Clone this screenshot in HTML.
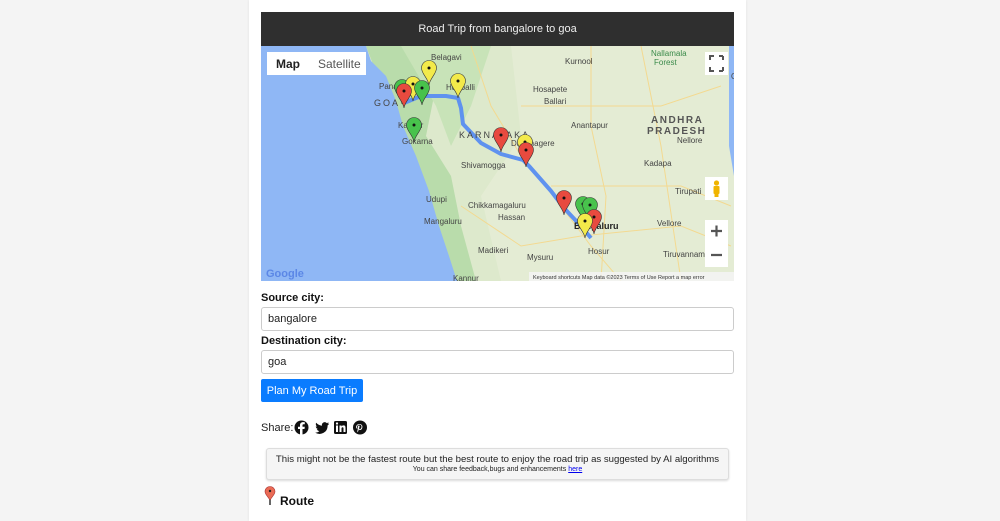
<!DOCTYPE html>
<html><head><meta charset="utf-8"><style>
*{box-sizing:border-box}
body{margin:0;background:#f4f4f4;font-family:"Liberation Sans",Arial,sans-serif;}
.card{position:absolute;left:249px;top:0;width:497px;height:521px;background:#fff;box-shadow:0 0 3px rgba(0,0,0,.08);}
.hdr{position:absolute;left:261px;top:12px;width:473px;height:34px;background:#2f2f2f;color:#eee;font-size:11px;text-align:center;line-height:34px;}
.map{position:absolute;left:261px;top:46px;width:473px;height:235px;overflow:hidden;background:#d8e8c8;}
.lbl{position:absolute;left:261px;font-size:11px;font-weight:bold;color:#111;}
.inp{position:absolute;left:261px;width:473px;height:24px;border:1px solid #ccc;border-radius:3px;padding-left:6px;font-size:11px;line-height:22px;color:#222;}
.btn{position:absolute;left:261px;top:379px;width:102px;height:23px;background:#0a7cff;color:#fff;font-size:11px;text-align:center;line-height:24px;border-radius:2px;}
.note{position:absolute;left:266px;top:448px;width:463px;height:32px;background:#f5f5f5;border:1px solid #ddd;border-radius:3px;box-shadow:0 1px 2px rgba(0,0,0,.15);text-align:center;}
</style></head><body>
<div class="card"></div>
<div class="hdr">Road Trip from bangalore to goa</div>
<div class="map">
<svg width="473" height="235" viewBox="0 0 473 235" font-family="Liberation Sans">
<defs>
<symbol id="pin" viewBox="0 0 16 26" overflow="visible"><path d="M8 25 C7 18 0.5 14 0.5 8 A7.5 7.5 0 0 1 15.5 8 C15.5 14 9 18 8 25Z" stroke="#333" stroke-width=".6"/><circle cx="8" cy="8" r="1.5" fill="#111"/></symbol>
</defs>
<rect width="473" height="235" fill="#dde9cc"/>
<path d="M250 0 L473 0 L473 235 L240 235 L220 150 L260 90Z" fill="#e4ecd4"/>
<path d="M105 0 L180 0 L175 40 L165 90 L190 130 L200 180 L215 235 L195 235Z" fill="#b9dcab"/>
<path d="M140 0 L230 0 L210 60 L190 100 L175 60Z" fill="#c8e3b8"/>
<path d="M0 0 L105 0 L110 15 L125 30 L135 55 L142 80 L155 110 L168 145 L178 180 L188 210 L196 235 L0 235Z" fill="#8fb7f5"/>
<path d="M468 0 L473 0 L473 130 L468 100Z" fill="#8fb7f5"/>
<g stroke="#f5d88a" stroke-width="1" fill="none" opacity=".9">
<path d="M210 0 L230 60 L260 110 L300 160 L330 200 L360 235"/><path d="M330 0 L330 80 L345 150 L340 235"/><path d="M260 60 L400 60 L460 40"/><path d="M290 140 L420 140 L470 160"/><path d="M320 190 L420 180 L470 200"/><path d="M200 160 L260 200 L320 190"/><path d="M380 0 L400 100 L420 235"/></g>
<path d="M143 57 L160 50 L185 50 L197 52 L200 62 L202 78 L220 97 L240 108 L262 114 L268 120 L290 145 L303 162 L318 178 L330 192" stroke="#5f92ef" stroke-width="4" fill="none" stroke-linejoin="round"/>
<g font-size="8" fill="#444">
<text x="170" y="14">Belagavi</text><text x="118" y="43">Panaji</text><text x="113" y="60" font-size="9" letter-spacing="2">GOA</text><text x="185" y="44">Hubballi</text>
<text x="137" y="82">Karwar</text><text x="141" y="98">Gokarna</text><text x="198" y="92" font-size="9" letter-spacing="2">KARNATAKA</text>
<text x="250" y="100">Davanagere</text><text x="200" y="122">Shivamogga</text><text x="165" y="156">Udupi</text><text x="207" y="162">Chikkamagaluru</text>
<text x="237" y="174">Hassan</text><text x="163" y="178">Mangaluru</text><text x="217" y="207">Madikeri</text><text x="266" y="214">Mysuru</text>
<text x="272" y="46">Hosapete</text><text x="283" y="58">Ballari</text><text x="310" y="82">Anantapur</text><text x="383" y="120">Kadapa</text>
<text x="414" y="148">Tirupati</text><text x="396" y="180">Vellore</text><text x="402" y="211">Tiruvannamalai</text><text x="327" y="208">Hosur</text>
<text x="304" y="18">Kurnool</text><text x="390" y="10" fill="#3a8a4a">Nallamala</text><text x="393" y="19" fill="#3a8a4a">Forest</text>
<text x="470" y="33">O</text><text x="416" y="97">Nellore</text><text x="192" y="235">Kannur</text></g>
<g font-size="10" font-weight="bold" fill="#555" letter-spacing="1.5"><text x="390" y="77">ANDHRA</text><text x="386" y="88">PRADESH</text></g>
<g font-size="9" fill="#222" font-weight="bold"><text x="313" y="183">Bengaluru</text></g>
<use href="#pin" x="133" y="33" width="16" height="26" fill="#48c24c"/>
<use href="#pin" x="144" y="30" width="16" height="26" fill="#f3ea4a"/>
<use href="#pin" x="135" y="37" width="16" height="26" fill="#e84a3f"/>
<use href="#pin" x="153" y="34" width="16" height="26" fill="#48c24c"/>
<use href="#pin" x="160" y="14" width="16" height="26" fill="#f3ea4a"/>
<use href="#pin" x="189" y="27" width="16" height="26" fill="#f3ea4a"/>
<use href="#pin" x="145" y="71" width="16" height="26" fill="#48c24c"/>
<use href="#pin" x="232" y="81" width="16" height="26" fill="#e84a3f"/>
<use href="#pin" x="256" y="88" width="16" height="26" fill="#f3ea4a"/>
<use href="#pin" x="257" y="96" width="16" height="26" fill="#e84a3f"/>
<use href="#pin" x="295" y="144" width="16" height="26" fill="#e84a3f"/>
<use href="#pin" x="314" y="150" width="16" height="26" fill="#48c24c"/>
<use href="#pin" x="321" y="151" width="16" height="26" fill="#48c24c"/>
<use href="#pin" x="325" y="163" width="16" height="26" fill="#e84a3f"/>
<use href="#pin" x="316" y="167" width="16" height="26" fill="#f3ea4a"/>
<rect x="6" y="6" width="41" height="23" fill="#fff"/><text x="15" y="22" font-size="12" font-weight="bold" fill="#222">Map</text>
<rect x="47" y="6" width="58" height="23" fill="#fff"/><text x="57" y="22" font-size="12" fill="#555">Satellite</text>
<rect x="444" y="6" width="23" height="23" fill="#fff"/><path d="M449 14v-4h4M462 10h-4M462 10v4M449 21v4h4M462 25h-4M462 25v-4" stroke="#555" stroke-width="2" fill="none"/>
<rect x="444" y="131" width="23" height="23" fill="#fff"/><circle cx="455.5" cy="137" r="2.6" fill="#f0b400"/><rect x="452.5" y="140" width="6" height="8" rx="1" fill="#f0b400"/><rect x="453.5" y="147" width="4" height="4" fill="#f0b400"/>
<rect x="444" y="174" width="23" height="47" fill="#fff"/><path d="M450 185h11M455.5 179.5v11M450 209h11" stroke="#555" stroke-width="2.2"/>
<text x="5" y="231" font-size="11" font-weight="bold" fill="#5b87e6">Google</text>
<rect x="268" y="226" width="205" height="9" fill="#f4f4f4" opacity=".85"/>
<text x="272" y="233" font-size="5.5" fill="#333">Keyboard shortcuts    Map data ©2023    Terms of Use    Report a map error</text>
</svg>
</div>
<div class="lbl" style="top:292px">Source city:</div>
<div class="inp" style="top:307px">bangalore</div>
<div class="lbl" style="top:335px">Destination city:</div>
<div class="inp" style="top:350px">goa</div>
<div class="btn">Plan My Road Trip</div>
<div style="position:absolute;left:261px;top:422px;font-size:11px;color:#222">Share:</div>
<svg style="position:absolute;left:294px;top:420px" width="76" height="15" viewBox="0 0 76 15">
<circle cx="7.5" cy="7.5" r="7" fill="#111"/><path d="M8.5 15V9h2l.3-2.3H8.5V5.3c0-.7.2-1.1 1.1-1.1h1.2V2.2c-.3 0-1-.1-1.8-.1-1.8 0-3 1.1-3 3v1.6h-2V9h2v6z" fill="#fff"/>
<path d="M35 3.5c-.5.2-1 .4-1.6.4.6-.3 1-.9 1.2-1.5-.5.3-1.1.6-1.8.7a2.8 2.8 0 0 0-4.8 2.6c-2.3-.1-4.4-1.2-5.8-2.9-.8 1.3-.3 2.9.9 3.7-.5 0-.9-.1-1.3-.3 0 1.4 1 2.6 2.3 2.8-.4.1-.9.1-1.3.1.4 1.1 1.4 1.9 2.6 1.9A5.7 5.7 0 0 1 21.2 12.6 8 8 0 0 0 33.6 5.8v-.4c.6-.4 1-.9 1.4-1.4z" fill="#111"/>
<rect x="40" y="1" width="13" height="13" rx="1.5" fill="#111"/><rect x="42" y="5.5" width="2" height="6.5" fill="#fff"/><circle cx="43" cy="3.5" r="1.1" fill="#fff"/><path d="M45.5 5.5h2v1c.4-.7 1.2-1.1 2-1.1 1.6 0 2 1 2 2.5V12h-2V8.4c0-.7-.2-1.2-.9-1.2s-1.1.5-1.1 1.2V12h-2z" fill="#fff"/>
<circle cx="66" cy="7.5" r="7" fill="#111"/><path d="M65.5 4c-2.4 0-3.4 1.7-3.4 3 0 .9.4 1.6 1 1.8.2.1.3 0 .3-.2l.1-.4c0-.1 0-.2-.1-.3-.2-.3-.3-.6-.3-1 0-1.2.9-2.3 2.4-2.3 1.3 0 2 .8 2 1.9 0 1.4-.6 2.6-1.6 2.6-.5 0-.9-.4-.8-1 .2-.6.5-1.3.5-1.8 0-.4-.2-.8-.7-.8-.6 0-1 .6-1 1.4 0 .5.2.8.2.8l-.7 2.9c-.1.6 0 1.4 0 1.7h.2c.2-.3.6-1 .8-1.7l.3-1.2c.2.3.7.6 1.2.6 1.5 0 2.5-1.4 2.5-3.3C68.5 5.3 67.3 4 65.5 4z" fill="#fff"/>
</svg>
<div class="note"><div style="font-size:9.6px;color:#222;margin-top:5px;white-space:nowrap">This might not be the fastest route but the best route to enjoy the road trip as suggested by AI algorithms</div><div style="font-size:7px;color:#222;margin-top:1px">You can share feedback,bugs and enhancements <span style="color:#00e;text-decoration:underline">here</span></div></div>
<svg style="position:absolute;left:264px;top:486px" width="12" height="20" viewBox="0 0 12 20"><path d="M6 19 L6 11" stroke="#333" stroke-width="1.5"/><path d="M6 0.5a5 5 0 0 1 5 5c0 3-3 5-4.5 8h-1C4 10.5 1 8.5 1 5.5a5 5 0 0 1 5-5z" fill="#ea6b55" stroke="#a33" stroke-width=".6"/><circle cx="6" cy="5" r="1.2" fill="#222"/></svg>
<div style="position:absolute;left:280px;top:494px;font-size:12px;font-weight:bold;color:#111">Route</div>
</body></html>
